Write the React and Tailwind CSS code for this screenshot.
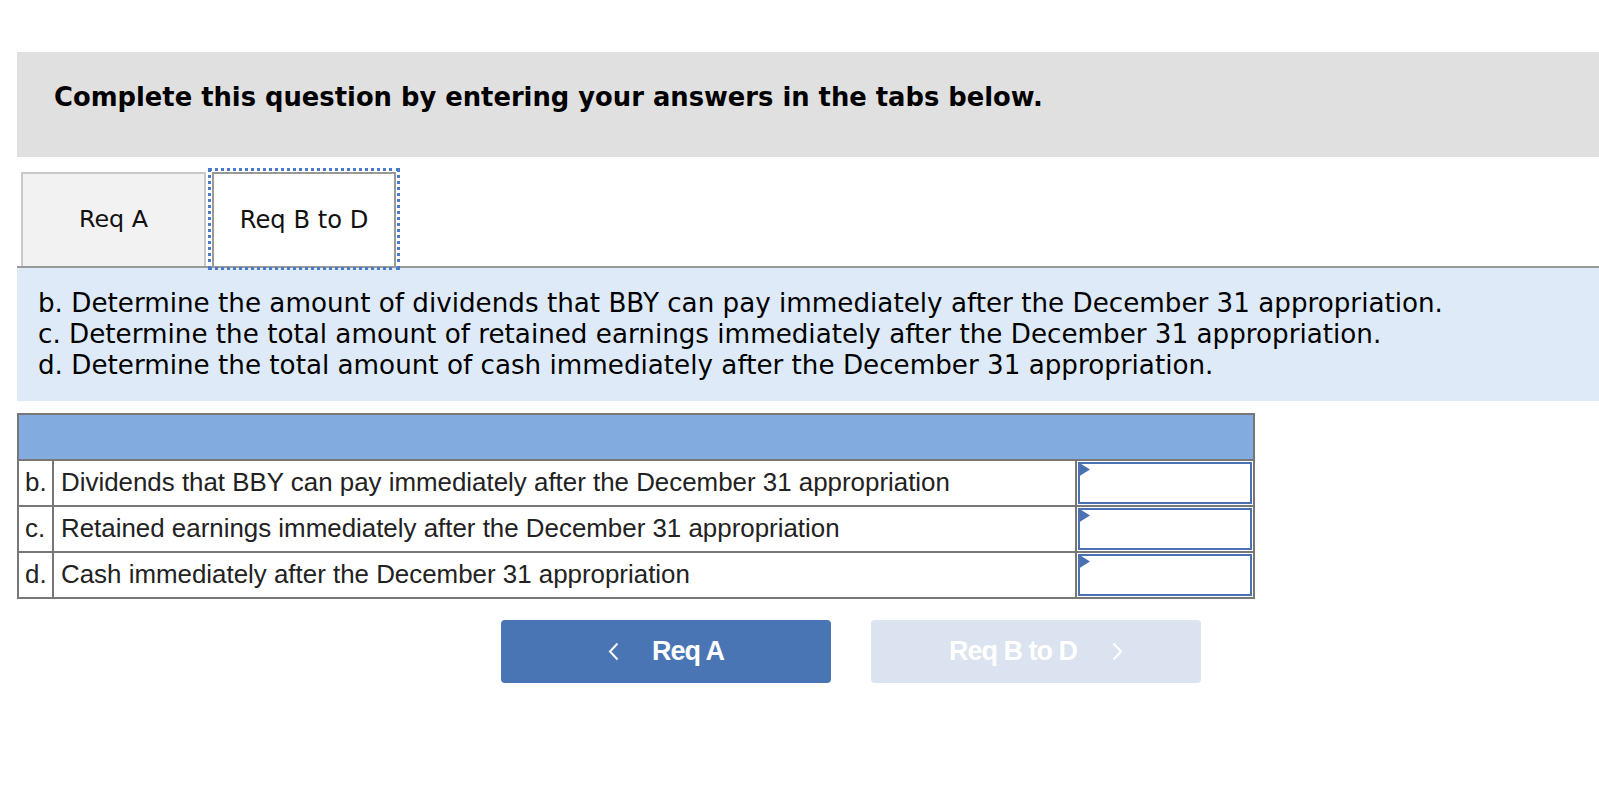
import React from "react";

const rows = [
  ["b.", "Dividends that BBY can pay immediately after the December 31 appropriation"],
  ["c.", "Retained earnings immediately after the December 31 appropriation"],
  ["d.", "Cash immediately after the December 31 appropriation"],
];

function Chevron({ dir }) {
  return (
    <svg width="11" height="19" viewBox="0 0 11 19" fill="none" className="shrink-0">
      {dir === "left" ? (
        <polyline points="9.5,1.5 2,9.5 9.5,17.5" stroke="white" strokeWidth="2" strokeLinejoin="miter" />
      ) : (
        <polyline points="1.5,1.5 9,9.5 1.5,17.5" stroke="white" strokeWidth="2" strokeLinejoin="miter" />
      )}
    </svg>
  );
}

export default function App() {
  const verdana = { fontFamily: '"DejaVu Sans", Verdana, sans-serif' };
  return (
    <div className="min-h-screen bg-white pl-[17px] pt-[52px]" style={verdana}>
      <div className="h-[105px] bg-[#e0e0e0] pl-[37px] pt-[30px]">
        <h1 className="text-[25.8px] font-bold leading-[30px] text-black">
          Complete this question by entering your answers in the tabs below.
        </h1>
      </div>

      <div className="mt-[15px] flex border-b-2 border-[#9a9a9a] pl-[4px]">
        <div className="flex h-[94px] w-[185px] items-center justify-center border-2 border-b-0 border-[#c8c8c8] bg-[#f2f2f2] text-[23.8px] text-[#111]">
          Req A
        </div>
        <div className="ml-[6px] flex h-[94px] w-[184px] items-center justify-center border-2 border-b-0 border-[#999] bg-white text-[24.2px] text-[#111] outline-[3px] outline-dotted outline-offset-[1px] outline-[#4a7bc8]">
          Req B to D
        </div>
      </div>

      <div className="bg-[#deeaf7] py-5 pl-[21px] text-[26.2px] leading-[31px] text-black">
        <p>b. Determine the amount of dividends that BBY can pay immediately after the December 31 appropriation.</p>
        <p>c. Determine the total amount of retained earnings immediately after the December 31 appropriation.</p>
        <p>d. Determine the total amount of cash immediately after the December 31 appropriation.</p>
      </div>

      <table
        className="mt-[12px] w-[1238px] border-collapse text-[25.9px] text-[#222]"
        style={{ fontFamily: '"Liberation Sans", Arial, sans-serif' }}
      >
        <tbody>
          <tr>
            <td colSpan={3} className="h-[46px] border-2 border-[#777] bg-[#82abdf]"></td>
          </tr>
          {rows.map(([k, t]) => (
            <tr key={k}>
              <td className="h-[46px] w-[35px] border-2 border-[#777] pl-[6px] leading-none">{k}</td>
              <td className="border-2 border-[#777] pl-[7px] leading-none">{t}</td>
              <td className="w-[178px] border-2 border-[#777] p-px">
                <div className="relative h-[42px] w-full border-2 border-[#4a72b2] bg-white">
                  <svg className="absolute left-[-2px] top-[-2px]" width="12" height="15" viewBox="0 0 12 15">
                    <polygon points="0,0 12,7.5 0,15" fill="#4a72b2" />
                  </svg>
                </div>
              </td>
            </tr>
          ))}
        </tbody>
      </table>

      <div
        className="ml-[484px] mt-[21px] flex gap-[40px]"
        style={{ fontFamily: '"Liberation Sans", Arial, sans-serif' }}
      >
        <button className="flex h-[63px] w-[330px] items-center justify-center gap-[33px] rounded-[4px] bg-[#4a75b4] text-[27px] font-bold tracking-[-1px] text-white">
          <Chevron dir="left" />
          <span>Req A</span>
        </button>
        <button className="flex h-[63px] w-[330px] items-center justify-center gap-[35px] rounded-[4px] bg-[#dae3ef] text-[27px] font-bold tracking-[-1px] text-white">
          <span>Req B to D</span>
          <Chevron dir="right" />
        </button>
      </div>
    </div>
  );
}
